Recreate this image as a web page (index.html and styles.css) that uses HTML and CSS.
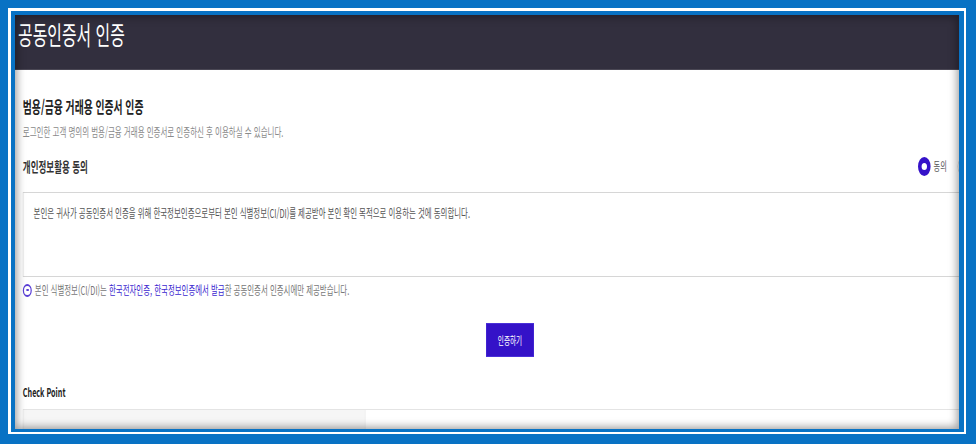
FILE: index.html
```html
<!DOCTYPE html>
<html lang="ko">
<head>
<meta charset="utf-8">
<title>공동인증서 인증</title>
<link rel="stylesheet" href="styles.css">
</head>
<body>
<div class="frame">
  <div class="window">
    <div class="stage">
      <header class="topbar">
        <h1 class="title">공동인증서 인증</h1>
      </header>
      <main class="content">
        <h2 class="heading">범용/금융 거래용 인증서 인증</h2>
        <p class="desc">로그인한 고객 명의의 범용/금융 거래용 인증서로 인증하신 후 이용하실 수 있습니다.</p>
        <div class="agree-row">
          <span class="agree-title">개인정보활용 동의</span>
          <div class="radios">
            <label class="radio"><span class="dot dot-on"></span><span class="radio-label">동의</span></label>
            <label class="radio radio-off"><span class="dot"></span></label>
          </div>
        </div>
        <div class="terms">본인은 귀사가 공동인증서 인증을 위해 한국정보인증으로부터 본인 식별정보(CI/DI)를 제공받아 본인 확인 목적으로 이용하는 것에 동의합니다.</div>
        <div class="info"><span class="info-icon"><span class="info-mark"></span></span><span class="info-text">본인 식별정보(CI/DI)는 <span class="link">한국전자인증, 한국정보인증에서 발급</span>한 공동인증서 인증시에만 제공받습니다.</span></div>
        <div class="actions"><button class="btn" type="button">인증하기</button></div>
        <h3 class="cp-title">Check Point</h3>
        <div class="cp-table">
          <div class="cp-left"></div>
          <div class="cp-right"></div>
        </div>
      </main>
    </div>
  </div>
</div>
</body>
</html>
```
FILE: styles.css
```css
html, body {
  margin: 0;
  padding: 0;
}
body {
  width: 976px;
  height: 444px;
  overflow: hidden;
  background: #0872c4;
  font-family: "Noto Sans CJK KR", "Noto Sans", sans-serif;
}
.frame {
  margin: 8px 10px 10px 8px;
  border-style: solid;
  border-color: #ffffff;
  border-width: 3px 2px 2px 3px;
  padding: 4px 5px 3px 4px;
  background: #0872c4;
  height: 414px;
  box-sizing: content-box;
}
.window {
  position: relative;
  width: 944px;
  height: 414px;
  overflow: hidden;
  background: #ffffff;
}
.window::after {
  content: "";
  position: absolute;
  inset: 0;
  pointer-events: none;
  box-shadow: inset 0 0 9px 2px rgba(0, 0, 0, 0.38);
}
.stage {
  width: 1650px;
  transform: scaleX(0.6);
  transform-origin: 0 0;
}
.topbar {
  height: 55px;
  box-sizing: border-box;
  padding: 3px 5px 0;
  background: #322f3e;
  border-bottom: 1px solid #4a4754;
}
.title {
  margin: 0;
  font-size: 26.5px;
  line-height: 32px;
  font-weight: 400;
  color: #ffffff;
}
.content {
  padding: 0 13px;
}
.heading {
  margin: 26px 0 0;
  font-size: 16.4px;
  line-height: 20px;
  font-weight: 700;
  color: #222222;
}
.desc {
  margin: 8px 0 0;
  font-size: 12.5px;
  line-height: 16px;
  color: #8a8a8a;
}
.agree-row {
  margin-top: 17px;
  display: flex;
  justify-content: space-between;
  align-items: center;
  height: 18px;
}
.agree-title {
  font-size: 14.2px;
  line-height: 18px;
  font-weight: 700;
  color: #333333;
}
.radios {
  display: flex;
  align-items: center;
  gap: 18px;
}
.radio {
  display: flex;
  align-items: center;
  gap: 5px;
}
.radio-off {
  margin-right: 45px;
}
.dot {
  width: 21px;
  height: 19px;
  box-sizing: border-box;
  border-radius: 50%;
  border: 1px solid #cfcfcf;
  background: #ffffff;
}
.dot-on {
  border: 6px solid #3512c9;
}
.radio-label {
  font-size: 12px;
  line-height: 18px;
  color: #555555;
}
.terms {
  margin-top: 17px;
  height: 85px;
  box-sizing: border-box;
  border: 1px solid #d6d6d6;
  padding: 12px 17px;
  font-size: 12.4px;
  line-height: 16px;
  color: #555555;
}
.info {
  margin-top: 5px;
  height: 16px;
  display: flex;
  align-items: center;
  gap: 5px;
}
.info-icon {
  display: flex;
  width: 15px;
  height: 13px;
  box-sizing: border-box;
  border: 2px solid #5a3fd6;
  border-radius: 50%;
  align-items: center;
  justify-content: center;
}
.info-mark {
  width: 4px;
  height: 2px;
  background: #5a3fd6;
}
.info-text {
  font-size: 12.4px;
  line-height: 16px;
  color: #777777;
}
.link {
  color: #3b1fcf;
  font-weight: 400;
}
.actions {
  margin-top: 25px;
  display: flex;
  justify-content: center;
}
.btn {
  width: 80px;
  height: 34px;
  border: 1px solid #4a30d8;
  background: #3412c8;
  color: #ffffff;
  font-family: "Noto Sans CJK KR", "Noto Sans", sans-serif;
  font-size: 11px;
  padding: 0;
}
.cp-title {
  margin: 27px 0 0;
  font-size: 12px;
  line-height: 16px;
  font-weight: 700;
  color: #222222;
}
.cp-table {
  margin-top: 9px;
  display: flex;
  height: 40px;
  border-top: 1px solid #e4e4e4;
}
.cp-left {
  width: 569px;
  background: #f6f6f6;
  border-left: 1px solid #e8e8e8;
}
.cp-right {
  flex: 1;
  background: #ffffff;
  border-left: 1px solid #e4e4e4;
}
```
